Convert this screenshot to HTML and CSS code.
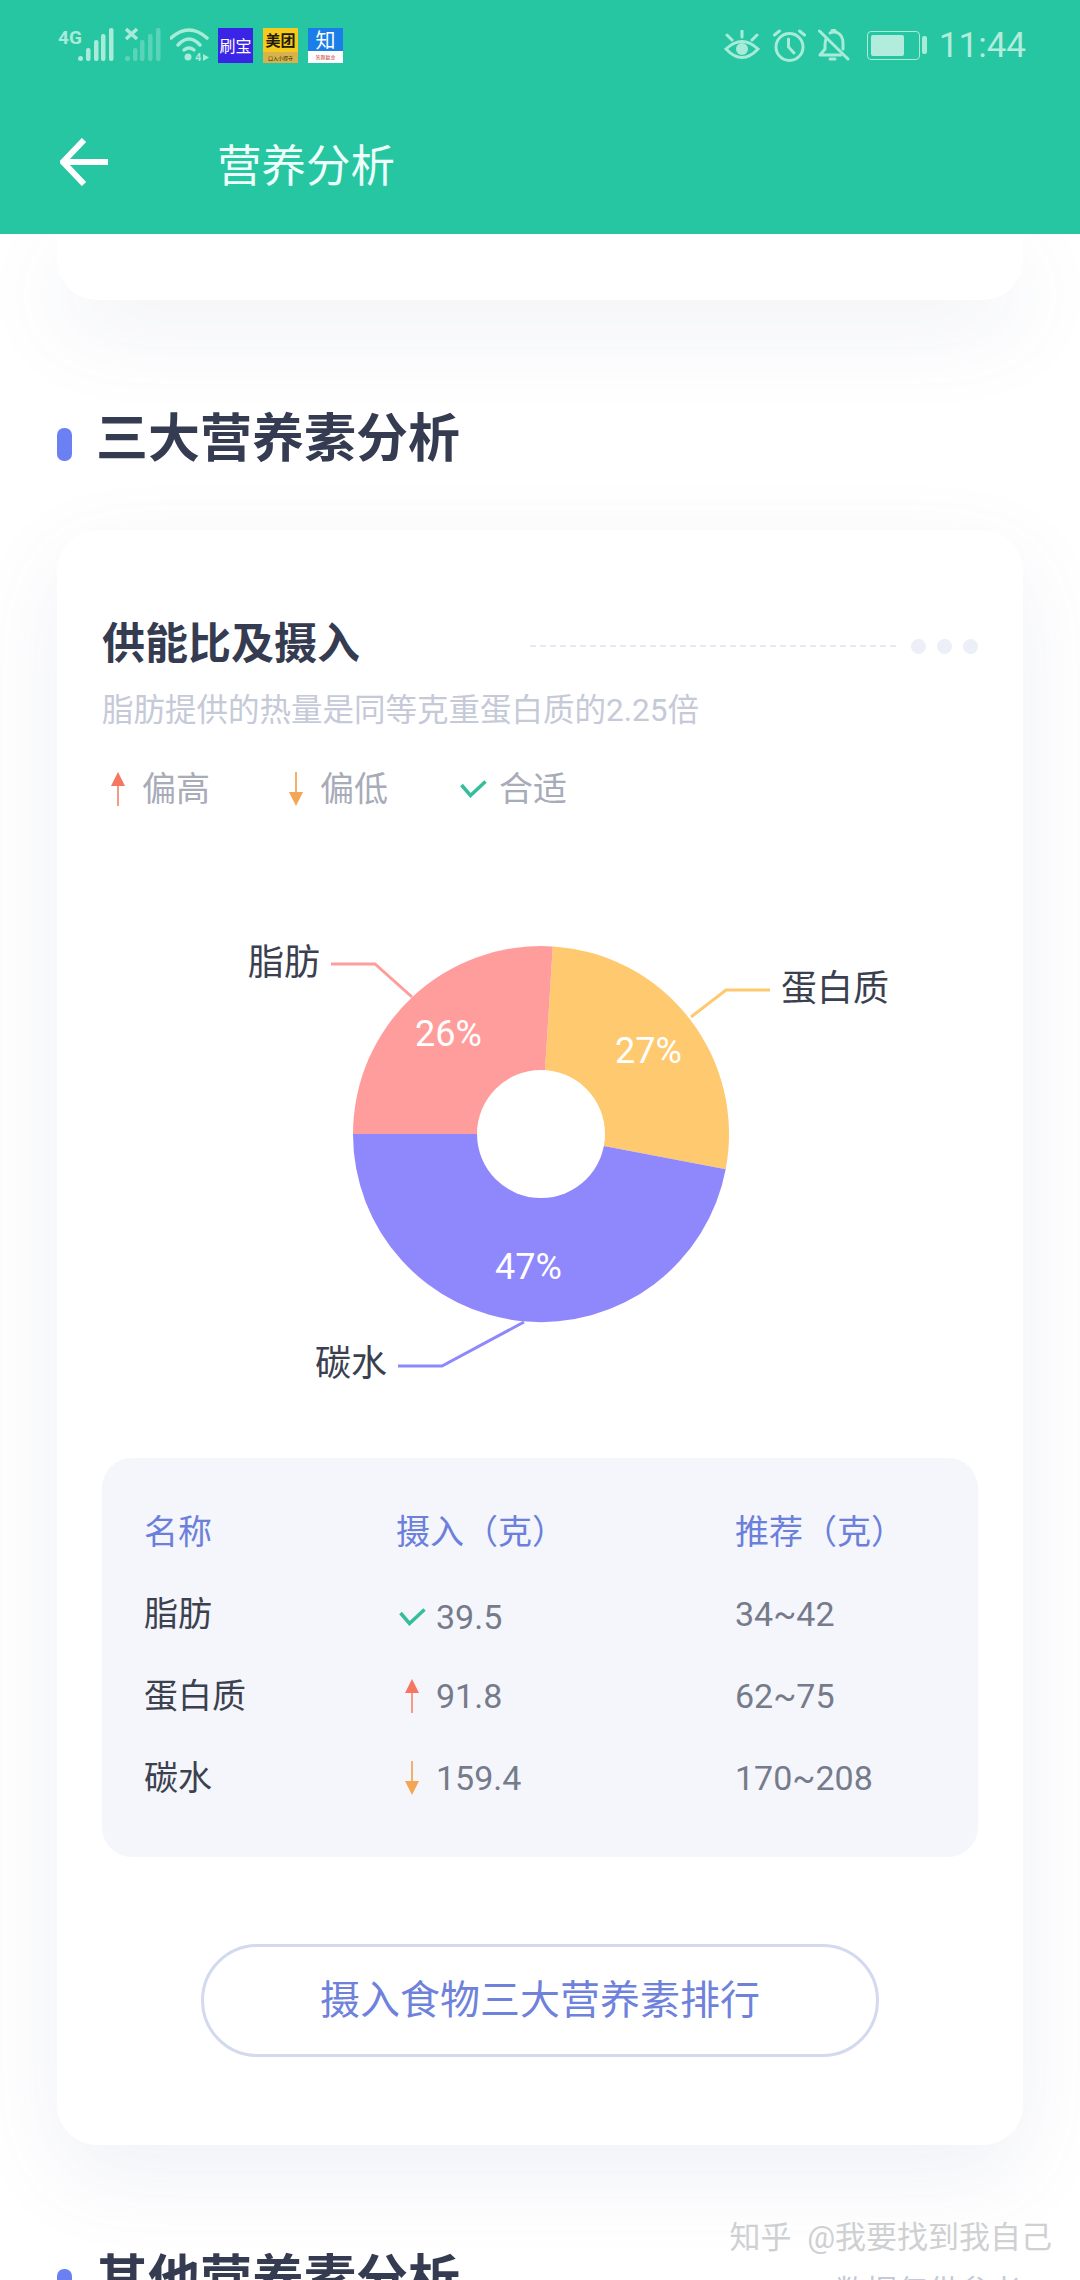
FILE: index.html
```html
<!DOCTYPE html>
<html lang="zh-CN">
<head>
    <meta charset="UTF-8">
    <meta name="viewport" content="width=device-width, initial-scale=1.0">
    <title>营养分析</title>
    <link rel="stylesheet" href="styles.css">
</head>
<body>
    <svg class="sprites" width="0" height="0">
        <symbol id="arrow-up" viewBox="0 0 14 34">
            <path d="M7 14V34" stroke="#f79a88" stroke-width="2" fill="none"/>
            <path d="M7 0L14 14H0Z" fill="#f5775f"/>
        </symbol>
        <symbol id="arrow-down" viewBox="0 0 14 34">
            <path d="M7 0V20" stroke="#f3b06a" stroke-width="2" fill="none"/>
            <path d="M7 34L14 20H0Z" fill="#f3a653"/>
        </symbol>
        <symbol id="check" viewBox="0 0 27 18">
            <path d="M1.500 5L10.500 15.500L25.500 1.500" stroke="#35bd9c" stroke-width="3.500" fill="none"/>
        </symbol>
    </svg>

    <header class="header">
        <div class="status-bar">
            <div class="status-left">
                <svg class="signal" width="105" height="36" viewBox="58 27 105 36">
                    <text x="58" y="44" class="net-label">4G</text>
                    <g fill="#a8ebd9">
                        <rect x="78" y="56" width="5" height="5" rx="2.500"/>
                        <rect x="86" y="48" width="4.500" height="13" rx="2"/>
                        <rect x="94" y="40" width="4.500" height="21" rx="2"/>
                        <rect x="101" y="34" width="4.500" height="27" rx="2"/>
                        <rect x="109" y="28" width="4.500" height="33" rx="2"/>
                    </g>
                    <path d="M126 29L137 39M137 29L126 39" stroke="#a8ebd9" stroke-width="3.500"/>
                    <g fill="#a8ebd9" opacity=".4">
                        <rect x="125" y="56" width="5" height="5" rx="2.500"/>
                        <rect x="133" y="48" width="4.500" height="13" rx="2"/>
                        <rect x="140" y="40" width="4.500" height="21" rx="2"/>
                        <rect x="148" y="34" width="4.500" height="27" rx="2"/>
                        <rect x="156" y="28" width="4.500" height="33" rx="2"/>
                    </g>
                </svg>
                <svg class="wifi" width="40" height="36" viewBox="170 27 40 36">
                    <g stroke="#a8ebd9" stroke-width="3.500" fill="none" stroke-linecap="round">
                        <path d="M171 38Q189 22 207 38"/>
                        <path d="M178 45Q189 33 200 45"/>
                        <path d="M184 50Q189 46 194 50"/>
                    </g>
                    <circle cx="188" cy="57" r="3.500" fill="#a8ebd9"/>
                    <text x="195" y="61" class="wifi-label">4</text>
                    <path d="M203 54L209 57.500L203 61Z" fill="#a8ebd9"/>
                </svg>
                <div class="app-icons">
                    <div class="app-icon app-shua">刷宝</div>
                    <div class="app-icon app-meituan"><span>美团</span><small>口入小得守</small></div>
                    <div class="app-icon app-zhi"><span>知</span><small>答题赢金</small></div>
                </div>
            </div>
            <div class="status-right">
                <svg width="36" height="30" viewBox="0 0 36 30">
                    <g stroke="#a8ebd9" stroke-width="3" fill="none" stroke-linecap="round">
                        <path d="M2 19Q18 4 34 19Q18 36 2 19Z"/>
                        <path d="M18 1V7M3 5L8 10M33 5L28 10"/>
                    </g>
                    <circle cx="18" cy="19" r="6" fill="#a8ebd9"/>
                </svg>
                <svg class="alarm" width="33" height="33" viewBox="0 0 33 33">
                    <g stroke="#a8ebd9" stroke-width="3" fill="none" stroke-linecap="round">
                        <circle cx="16.500" cy="18" r="13.500"/>
                        <path d="M15.500 10V18L21 24"/>
                        <path d="M1.500 6L6.500 2M31.500 6L26.500 2"/>
                    </g>
                </svg>
                <svg class="bell" width="32" height="32" viewBox="0 0 32 32">
                    <g stroke="#a8ebd9" stroke-width="3" fill="none" stroke-linecap="round" stroke-linejoin="round">
                        <path d="M8 10Q7 13 7 17V20L2 26H23"/>
                        <path d="M12 4Q16 2 20 4Q25 7 25 14V20"/>
                        <path d="M14 1.500H17"/>
                        <path d="M12 30H17"/>
                        <path d="M1.500 2L30 30"/>
                    </g>
                </svg>
                <div class="battery">
                    <div class="battery-body"><div class="battery-level"></div></div>
                    <div class="battery-tip"></div>
                </div>
                <span class="time">11:44</span>
            </div>
        </div>
        <div class="nav-bar">
            <svg class="back" width="48" height="48" viewBox="0 0 48 48">
                <path d="M2 24H48M24 2L3 24L24 46" stroke="#fff" stroke-width="6" fill="none"/>
            </svg>
            <h1 class="nav-title">营养分析</h1>
        </div>
    </header>

    <div class="card card-top"></div>

    <section>
        <div class="section-head">
            <span class="marker"></span>
            <h2>三大营养素分析</h2>
        </div>
        <div class="card card-main">
            <div class="card-title-row">
                <h3>供能比及摄入</h3>
                <div class="title-deco">
                    <span class="dash"></span>
                    <i></i><i></i><i></i>
                </div>
            </div>
            <p class="hint">脂肪提供的热量是同等克重蛋白质的2.25倍</p>
            <div class="legend">
                <div class="legend-item">
                    <svg width="14" height="34"><use href="#arrow-up"/></svg><span>偏高</span>
                </div>
                <div class="legend-item legend-low">
                    <svg width="14" height="34"><use href="#arrow-down"/></svg><span>偏低</span>
                </div>
                <div class="legend-item legend-ok">
                    <svg width="27" height="18"><use href="#check"/></svg><span>合适</span>
                </div>
            </div>

            <svg class="chart" width="876" height="500" viewBox="102 900 876 500">
                <g transform="translate(0 1)">
                    <path d="M541 1133L552.800 945.400A188 188 0 0 1 725.700 1168.200Z" fill="#fec96f"/>
                    <path d="M541 1133L725.700 1168.200A188 188 0 0 1 353 1133Z" fill="#8f88fd"/>
                    <path d="M541 1133L353 1133A188 188 0 0 1 552.800 945.400Z" fill="#ff9d9d"/>
                    <circle cx="541" cy="1133" r="64" fill="#fff"/>
                </g>
                <g fill="none" stroke-width="3">
                    <path d="M331 964H375L412 997" stroke="#ff9d9d"/>
                    <path d="M770 990H726L691 1017" stroke="#fec96f"/>
                    <path d="M398 1366H442L524 1322" stroke="#8f88fd"/>
                </g>
                <text x="248" y="975" class="chart-label">脂肪</text>
                <text x="781" y="1001" class="chart-label">蛋白质</text>
                <text x="315" y="1376" class="chart-label">碳水</text>
                <text x="448.500" y="1046" class="chart-pct">26%</text>
                <text x="648.500" y="1063" class="chart-pct">27%</text>
                <text x="528.500" y="1279" class="chart-pct">47%</text>
            </svg>

            <div class="nutri-table">
                <div class="th">名称</div>
                <div class="th">摄入（克）</div>
                <div class="th">推荐（克）</div>

                <div class="td-name">脂肪</div>
                <div class="td-val td-val-first"><span class="val-icon"><svg width="27" height="18"><use href="#check"/></svg></span>39.5</div>
                <div class="td-val">34~42</div>

                <div class="td-name">蛋白质</div>
                <div class="td-val"><span class="val-icon"><svg width="14" height="34"><use href="#arrow-up"/></svg></span>91.8</div>
                <div class="td-val">62~75</div>

                <div class="td-name">碳水</div>
                <div class="td-val"><span class="val-icon"><svg width="14" height="34"><use href="#arrow-down"/></svg></span>159.4</div>
                <div class="td-val">170~208</div>
            </div>

            <a class="rank-btn">摄入食物三大营养素排行</a>
        </div>
    </section>

    <section>
        <div class="section-head section-head-next">
            <span class="marker"></span>
            <h2>其他营养素分析</h2>
            <span class="note">数据仅供参考</span>
        </div>
    </section>

    <div class="watermark">知乎 @我要找到我自己</div>
</body>
</html>
```

FILE: styles.css
```css
* {
    box-sizing: border-box;
}

html, body {
    height: 2280px;
    overflow: hidden;
}

body {
    margin: 0;
    position: relative;
    background-color: #fff;
    font-family: Roboto, "Noto Sans CJK SC", sans-serif;
    color: #353b50;
}

.sprites {
    position: absolute;
}

/* header */
.header {
    height: 234px;
    background-color: #26c6a2;
    position: relative;
    z-index: 2;
}

.status-bar {
    height: 90px;
    padding: 0 54px 0 58px;
    display: flex;
    justify-content: space-between;
    align-items: center;
}

.status-left, .status-right {
    display: flex;
    align-items: center;
}

.net-label {
    font-size: 19px;
    font-weight: 700;
    fill: #a8ebd9;
}

.wifi-label {
    font-size: 11px;
    font-weight: 700;
    fill: #a8ebd9;
}

.wifi {
    margin-left: 7px;
}

.app-icons {
    display: flex;
    gap: 10px;
    margin-left: 8px;
}

.app-icon {
    width: 35px;
    height: 35px;
    display: flex;
    flex-direction: column;
    align-items: center;
    justify-content: center;
    font-family: "Noto Sans CJK SC", sans-serif;
    line-height: 1;
}

.app-shua {
    background-color: #3a25e6;
    color: #fff;
    font-size: 16px;
}

.app-meituan {
    background-color: #f7c81d;
    color: #221c05;
    font-size: 15px;
    font-weight: 700;
}

.app-meituan span {
    height: 24px;
    line-height: 24px;
}

.app-meituan small {
    width: 100%;
    height: 11px;
    line-height: 11px;
    background-color: #d8b24a;
    font-size: 5px;
    font-weight: 400;
    text-align: center;
}

.app-zhi {
    background: linear-gradient(#1a7de8 70%, #fff 70%);
    color: #fff;
    font-size: 20px;
}

.app-zhi span {
    height: 23px;
    line-height: 23px;
}

.app-zhi small {
    width: 100%;
    height: 12px;
    line-height: 12px;
    background-color: #fff;
    color: #c8433a;
    font-size: 5px;
    text-align: center;
}

.alarm {
    margin-left: 13px;
}

.bell {
    margin-left: 12px;
}

.battery {
    display: flex;
    align-items: center;
    gap: 2px;
    margin-left: 17px;
}

.battery-body {
    width: 53px;
    height: 29px;
    padding: 3px;
    border: 1.5px solid #a8ebd9;
    border-radius: 4px;
}

.battery-level {
    width: 33px;
    height: 100%;
    background-color: #b2ecdd;
    border-radius: 2px;
}

.battery-tip {
    width: 5px;
    height: 18px;
    background-color: #a8ebd9;
    border-radius: 2px;
}

.time {
    margin-left: 12px;
    font-size: 35px;
    font-weight: 400;
    color: #b2ecdd;
}

.nav-bar {
    height: 144px;
    padding-left: 60px;
    display: flex;
    align-items: center;
    gap: 109px;
}

.nav-title {
    margin: 0;
    font-size: 44.5px;
    font-weight: 400;
    color: #ecfff9;
}

/* cards */
.card {
    margin: 0 57px;
    background-color: #fff;
    box-shadow: 0 30px 90px rgba(90, 100, 150, 0.09);
    position: relative;
}

.card-top {
    height: 66px;
    border-radius: 0 0 40px 40px;
}

.card-main {
    height: 1615px;
    padding: 86px 45px 0;
    border-radius: 40px;
}

/* section titles */
.section-head {
    height: 100px;
    margin: 88px 59px 42px 57px;
    display: flex;
    align-items: center;
    position: relative;
}

.section-head h2 {
    margin: 4px 0 0 24px;
    font-size: 52px;
    font-weight: 700;
    line-height: 1;
}

.section-head-next {
    margin-top: 84px;
}

.marker {
    width: 15px;
    height: 33px;
    margin-top: 12px;
    background-color: #6b80f3;
    border-radius: 7px;
}

.note {
    margin: 18px 0 0 auto;
    font-size: 31px;
    color: #c5c9d8;
}

/* card heading */
.card-title-row {
    height: 60px;
    display: flex;
    align-items: center;
    justify-content: space-between;
}

.card-title-row h3 {
    margin: 0 0 3px;
    font-size: 43px;
    font-weight: 700;
    line-height: 1;
}

.title-deco {
    display: flex;
    align-items: center;
    gap: 11px;
}

.title-deco .dash {
    width: 366px;
    margin-right: 4px;
    border-top: 2px dashed #e6e8f3;
}

.title-deco i {
    width: 15px;
    height: 15px;
    border-radius: 50%;
    background-color: #eceef8;
}

.hint {
    margin: 13px 0 0;
    font-size: 31.5px;
    line-height: 44px;
    color: #c5c9d8;
}

.legend {
    height: 40px;
    margin-top: 37px;
    padding-left: 9px;
    display: flex;
    align-items: center;
    font-size: 34px;
    color: #a8abb8;
}

.legend-item {
    display: flex;
    align-items: center;
    gap: 17px;
}

.legend-item svg {
    margin-bottom: 3px;
}

.legend-item span {
    margin-bottom: 7px;
}

.legend-low {
    margin-left: 79px;
}

.legend-ok {
    margin-left: 72px;
    gap: 12px;
}

.chart {
    display: block;
    margin-top: 90px;
}

.chart-label {
    font-size: 36px;
    fill: #3a4050;
}

.chart-pct {
    font-size: 36px;
    fill: #fff;
    text-anchor: middle;
}

/* table */
.nutri-table {
    margin-top: 58px;
    height: 399px;
    padding: 33px 0 0 42px;
    display: grid;
    grid-template-columns: 252px 339px 1fr;
    grid-auto-rows: 82px;
    align-items: center;
    background-color: #f4f6fb;
    border-radius: 30px;
    font-size: 34px;
}

.th {
    margin-bottom: 5px;
    color: #6b7fdb;
}

.td-name {
    margin-bottom: 5px;
    color: #3c4150;
}

.td-val {
    display: flex;
    align-items: center;
    gap: 8px;
    color: #767b8c;
}

.td-val-first {
    padding-top: 6px;
}

.val-icon {
    width: 32px;
    display: flex;
    justify-content: center;
}

/* button */
.rank-btn {
    display: flex;
    align-items: center;
    justify-content: center;
    width: 678px;
    height: 113px;
    margin: 87px auto 0;
    padding-bottom: 7px;
    border: 3px solid #d3d9ef;
    border-radius: 57px;
    font-size: 40px;
    color: #6f82db;
}

.watermark {
    position: absolute;
    top: 2212px;
    right: 28px;
    z-index: 3;
    font-size: 31px;
    word-spacing: 8px;
    color: #cfd0d2;
    text-shadow: 1px 1px 0 #fff;
}
```
